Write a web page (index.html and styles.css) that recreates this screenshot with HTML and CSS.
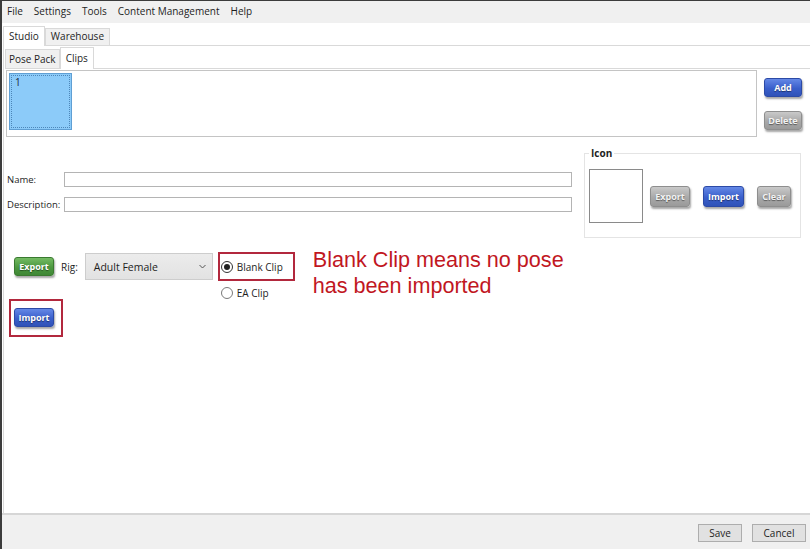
FILE: index.html
```html
<!DOCTYPE html>
<html lang="en">
<head>
  <meta charset="UTF-8">
  <meta name="viewport" content="width=device-width, initial-scale=1.0">
  <link rel="stylesheet" href="styles.css">
  <title>Clips</title>
</head>
<body>
  <div class="window">
    <nav class="menubar">
      <span>File</span>
      <span>Settings</span>
      <span>Tools</span>
      <span>Content Management</span>
      <span>Help</span>
    </nav>

    <main class="workspace">
      <div class="tabstrip top-tabs">
        <span class="tab active">Studio</span>
        <span class="tab">Warehouse</span>
      </div>

      <div class="tabpanel">
        <div class="tabstrip sub-tabs">
          <span class="tab">Pose Pack</span>
          <span class="tab active">Clips</span>
        </div>

        <div class="clip-row">
          <div class="clip-list">
            <div class="clip-tile">1</div>
          </div>
          <div class="clip-actions">
            <button class="btn blue">Add</button>
            <button class="btn gray">Delete</button>
          </div>
        </div>

        <div class="details">
          <div class="fields">
            <div class="field">
              <label for="nameInput">Name:</label>
              <input type="text" id="nameInput">
            </div>
            <div class="field">
              <label for="descInput">Description:</label>
              <input type="text" id="descInput">
            </div>
          </div>

          <fieldset class="icon-group">
            <legend>Icon</legend>
            <div class="icon-body">
              <div class="icon-preview"></div>
              <button class="btn gray btn-export">Export</button>
              <button class="btn blue btn-import">Import</button>
              <button class="btn gray btn-clear">Clear</button>
            </div>
          </fieldset>
        </div>

        <div class="rig-row">
          <div class="rig-controls">
            <button class="btn green">Export</button>
            <span class="rig-label">Rig:</span>
            <div class="dropdown">
              <span>Adult Female</span>
              <svg width="7" height="5" viewBox="0 0 7 5"><path d="M0.5 1 L3.5 4 L6.5 1" fill="none" stroke="#555" stroke-width="1"/></svg>
            </div>
          </div>

          <div class="clip-type">
            <div class="radio-row marked">
              <span class="radio checked"></span>
              <span>Blank Clip</span>
            </div>
            <div class="radio-row">
              <span class="radio"></span>
              <span>EA Clip</span>
            </div>
          </div>

          <p class="note">Blank Clip means no pose<br>has been imported</p>
        </div>

        <div class="import-box">
          <button class="btn blue">Import</button>
        </div>
      </div>
    </main>

    <footer class="footer">
      <button class="win-btn save">Save</button>
      <button class="win-btn cancel">Cancel</button>
    </footer>
  </div>
</body>
</html>
```

FILE: styles.css
```css
* {
  box-sizing: border-box;
}
body {
  margin: 0;
  font-family: "Open Sans", "Noto Sans", sans-serif;
  font-size: 10px;
  color: #1e1e1e;
  background: #fff;
}
.window {
  width: 810px;
  height: 549px;
  border-top: 1px solid #3c3c3c;
  border-left: 2px solid #3c3c3c;
  display: flex;
  flex-direction: column;
  overflow: hidden;
}
.menubar {
  height: 22px;
  flex: none;
  background: #f0f0f0;
  display: flex;
  gap: 11px;
  padding: 1px 0 0 5px;
  line-height: 18px;
}
.workspace {
  flex: 1;
  background: #fff;
  padding: 3px 0 0 1px;
  display: flex;
  flex-direction: column;
}
.tabstrip {
  display: flex;
  align-items: flex-end;
  border-bottom: 1px solid #d9d9d9;
}
.tab {
  border: 1px solid #d9d9d9;
  border-bottom: none;
  background: #f0f0f0;
  height: 17px;
  line-height: 15px;
  padding: 0 5px;
}
.tab.active {
  background: #fff;
  height: 20px;
  line-height: 19px;
  margin-bottom: -1px;
}
.sub-tabs {
  margin-left: 1px;
}
.sub-tabs .tab {
  height: 19px;
  line-height: 18px;
  padding: 0 3px;
}
.sub-tabs .tab.active {
  height: 22px;
  line-height: 20px;
  padding: 0 5px;
}
.tabpanel {
  flex: 1;
  border-left: 1px solid #d9d9d9;
  padding-top: 1px;
  display: flex;
  flex-direction: column;
}
.clip-row {
  display: flex;
  padding: 1px 8px 0 2px;
}
.clip-list {
  flex: 1;
  height: 67px;
  border: 1px solid #c4c4c4;
  padding: 2px;
}
.clip-tile {
  width: 63px;
  height: 57px;
  background: #8ccbf9;
  border: 1px solid #5f9fd4;
  outline: 1px dotted #4d86b8;
  outline-offset: -3px;
  padding: 1px 5px;
  line-height: 14px;
  color: #1a2a3a;
}
.clip-actions {
  width: 38px;
  margin-left: 7px;
  padding-top: 8px;
  display: flex;
  flex-direction: column;
  gap: 14px;
}
.btn {
  font-family: "Open Sans", sans-serif;
  font-weight: bold;
  font-size: 9px;
  color: #fff;
  text-shadow: 0 1px 1px rgba(0, 0, 0, 0.45);
  border-radius: 3px;
  padding: 0;
  height: 19px;
  box-shadow: 1px 2px 2px rgba(0, 0, 0, 0.35);
  cursor: pointer;
}
.btn.blue {
  background: linear-gradient(#6488e6, #3a5fcb 55%, #2f52b8);
  border: 1px solid #2c4aa6;
}
.btn.gray {
  background: linear-gradient(#c9c9c9, #a9a9a9 55%, #9a9a9a);
  border: 1px solid #8e8e8e;
  color: #f2f2f2;
}
.btn.green {
  background: linear-gradient(#74bb63, #4c9840 55%, #3f8735);
  border: 1px solid #3a7a30;
}
.details {
  display: flex;
  align-items: flex-start;
  padding: 0 9px 0 3px;
}
.fields {
  flex: 1;
  margin-top: 35px;
  display: flex;
  flex-direction: column;
  gap: 10px;
}
.field {
  display: flex;
  align-items: center;
}
.field label {
  width: 57px;
  line-height: 15px;
  font-size: 9.5px;
}
.field input {
  flex: 1;
  height: 15px;
  border: 1px solid #b4b4b4;
  padding: 0;
}
.icon-group {
  width: 217px;
  margin: 9px 0 0 12px;
  padding: 9px 4px 14px;
  border: 1px solid #e4e4e4;
}
.icon-group legend {
  font-weight: bold;
  line-height: 14px;
  padding: 0 2px;
}
.icon-body {
  display: flex;
  align-items: center;
}
.icon-preview {
  width: 54px;
  height: 54px;
  border: 1px solid #8a8a8a;
  background: #fff;
}
.icon-body .btn {
  height: 21px;
}
.btn-export {
  width: 40px;
  margin-left: 7px;
}
.btn-import {
  width: 41px;
  margin-left: 13px;
}
.btn-clear {
  width: 34px;
  margin-left: 13px;
}
.rig-row {
  display: flex;
  align-items: flex-start;
  margin-top: 14px;
  padding-left: 10px;
}
.rig-controls {
  display: flex;
  align-items: center;
  gap: 7px;
  height: 29px;
}
.rig-controls .btn {
  width: 40px;
  height: 19px;
}
.dropdown {
  width: 128px;
  height: 27px;
  background: linear-gradient(#ececec, #e2e2e2);
  border: 1px solid #cdcdcd;
  display: flex;
  align-items: center;
  justify-content: space-between;
  padding: 0 6px 0 8px;
  font-size: 10.5px;
}
.clip-type {
  margin-left: 5px;
}
.radio-row {
  display: flex;
  align-items: center;
  gap: 4px;
  height: 14px;
  padding-left: 3px;
  margin-top: 5px;
}
.radio-row.marked {
  width: 77px;
  height: 29px;
  margin-top: 0;
  padding-left: 1px;
  border: 2px solid #b2283d;
}
.radio {
  width: 12px;
  height: 12px;
  border: 1px solid #7a7a7a;
  border-radius: 50%;
  background: #fff;
  display: flex;
  align-items: center;
  justify-content: center;
}
.radio.checked {
  border-color: #333;
}
.radio.checked::after {
  content: "";
  width: 6px;
  height: 6px;
  border-radius: 50%;
  background: #222;
}
.note {
  margin: -5px 0 0 18px;
  font-family: "Liberation Sans", Arial, sans-serif;
  font-size: 21.6px;
  line-height: 26px;
  color: #c1171f;
}
.import-box {
  width: 54px;
  height: 38px;
  margin: -1px 0 0 5px;
  border: 2px solid #b2283d;
  padding: 7px 0 0 3px;
}
.import-box .btn {
  width: 40px;
}
.footer {
  height: 36px;
  flex: none;
  border-top: 2px solid #d6d6d6;
  background: #f0f0f0;
  display: flex;
  justify-content: flex-end;
  align-items: flex-start;
  gap: 10px;
  padding: 9px 4px 0 0;
}
.win-btn {
  font-family: "Open Sans", sans-serif;
  font-size: 10px;
  height: 18px;
  padding: 0;
  background: #e1e1e1;
  border: 1px solid #adadad;
  color: #1e1e1e;
}
.save {
  width: 44px;
}
.cancel {
  width: 54px;
}
```
